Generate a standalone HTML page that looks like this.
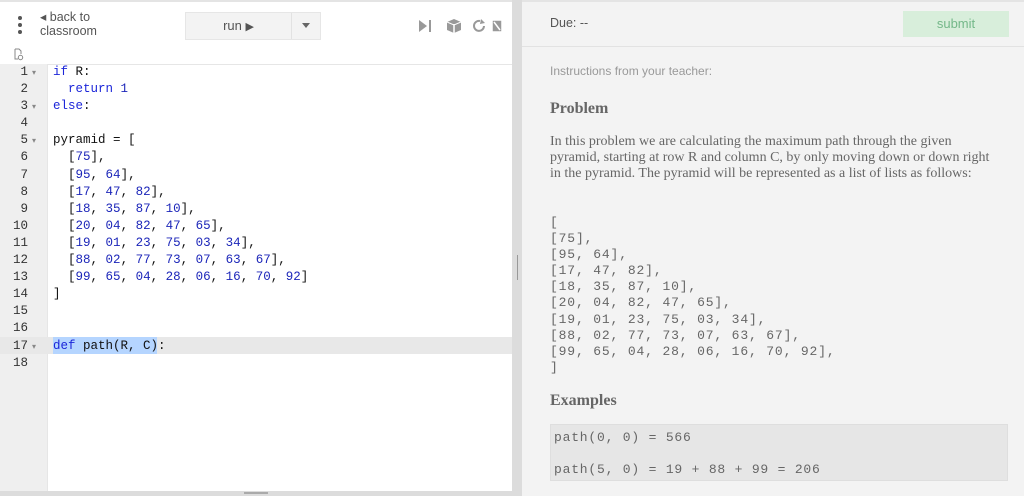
<!DOCTYPE html>
<html><head><style>
*{margin:0;padding:0;box-sizing:border-box}
body{width:1024px;height:496px;overflow:hidden;background:#f3f3f3;font-family:"Liberation Sans",sans-serif;position:relative}
#left{position:absolute;left:0;top:0;width:512px;height:491px;background:#fff;border-top:2px solid #e4e4e4}
#divider{position:absolute;left:512px;top:0;width:10px;height:496px;background:#dcdcdc}
#bottom{position:absolute;left:0;top:491px;width:512px;height:5px;background:#dcdcdc}
#gutter{position:absolute;left:0;top:64px;width:48px;height:427px;background:#efefef;border-right:1px solid #e6e6e6}
.k{color:#1c26d9}.n{color:#1c26b9}
#right{position:absolute;left:522px;top:0;right:0;height:496px;background:#f3f3f3}
pre{font-family:"Liberation Mono",monospace}
</style></head><body>
<div id="left">
 <div style="position:absolute;left:18px;top:14px;width:4px">
  <div style="width:4px;height:4px;border-radius:50%;background:#555;margin-bottom:3px"></div>
  <div style="width:4px;height:4px;border-radius:50%;background:#555;margin-bottom:3px"></div>
  <div style="width:4px;height:4px;border-radius:50%;background:#555"></div>
 </div>
 <div style="position:absolute;left:40px;top:8px;font-size:12.5px;line-height:14px;color:#555">◂ back to<br>classroom</div>
 <div style="position:absolute;left:185px;top:10px;width:136px;height:28px;background:#f3f3f3;border:1px solid #e6e6e6">
  <div style="position:absolute;left:0;top:0;width:106px;height:26px;border-right:1px solid #e2e2e2;text-align:center;line-height:25px;font-size:13px;color:#555">run <span style="font-size:11px">▶</span></div>
  <div style="position:absolute;left:116px;top:10px;border-left:4px solid transparent;border-right:4px solid transparent;border-top:5px solid #666"></div>
 </div>
 <svg style="position:absolute;left:418px;top:16px" width="86" height="16" viewBox="0 0 86 16" fill="#999">
  <path d="M1 2 L9 8 L1 14Z"/><rect x="11" y="2" width="2" height="12"/>
  <path d="M36 1 L43 4 L43 12 L36 15 L29 12 L29 4Z"/><path d="M36 6 L36 15" stroke="#fff" stroke-width="1.5"/><path d="M29 4 L36 7 L43 4" stroke="#fff" stroke-width="1" fill="none"/>
  <path d="M62 3 A5 5 0 1 0 66 8" stroke="#999" stroke-width="2" fill="none"/><path d="M63 1 L67 5 L62 6Z"/>
  <path d="M74 2 L84 2 L84 14 L74 14Z M76 4 L82 12" stroke="#fff" stroke-width="1.5"/>
 </svg>
 <svg style="position:absolute;left:14px;top:46px" width="10" height="13" viewBox="0 0 10 13"><path d="M1 1 H5 L7 3 V6 M1 1 V11 H4" stroke="#888" fill="none"/><circle cx="6.5" cy="9.5" r="2.2" stroke="#888" fill="none"/></svg>
 <div style="position:absolute;left:0;top:62px;width:512px;height:1px;background:#e6e6e6"></div>
</div>
<div id="gutter"></div>
<div style="position:absolute;left:0;top:337px;width:512px;height:17px;background:#e8e8e8"></div>
<div style="position:absolute;left:53px;top:337px;width:104px;height:17px;background:#b5d5ff"></div>
<div style="position:absolute;top:64px;left:0;width:512px">
<pre style="position:absolute;left:0;top:0;width:28px;text-align:right;font:12.5px 'Liberation Mono',monospace;line-height:17.1px;color:#333">1
2
3
4
5
6
7
8
9
10
11
12
13
14
15
16
17
18</pre>
<pre style="position:absolute;left:32px;top:0;font:8px 'Liberation Sans',sans-serif;line-height:17.1px;color:#888">▾

▾

▾











▾</pre>
<pre style="position:absolute;left:53px;top:0;font:12.5px 'Liberation Mono',monospace;line-height:17.1px;color:#111"><span class="k">if</span> R:
  <span class="k">return</span> <span class="n">1</span>
<span class="k">else</span>:

pyramid = [
  [<span class="n">75</span>],
  [<span class="n">95</span>, <span class="n">64</span>],
  [<span class="n">17</span>, <span class="n">47</span>, <span class="n">82</span>],
  [<span class="n">18</span>, <span class="n">35</span>, <span class="n">87</span>, <span class="n">10</span>],
  [<span class="n">20</span>, <span class="n">04</span>, <span class="n">82</span>, <span class="n">47</span>, <span class="n">65</span>],
  [<span class="n">19</span>, <span class="n">01</span>, <span class="n">23</span>, <span class="n">75</span>, <span class="n">03</span>, <span class="n">34</span>],
  [<span class="n">88</span>, <span class="n">02</span>, <span class="n">77</span>, <span class="n">73</span>, <span class="n">07</span>, <span class="n">63</span>, <span class="n">67</span>],
  [<span class="n">99</span>, <span class="n">65</span>, <span class="n">04</span>, <span class="n">28</span>, <span class="n">06</span>, <span class="n">16</span>, <span class="n">70</span>, <span class="n">92</span>]
]


<span class="k">def</span> path(R, C):
</pre>
</div>
<div id="divider"><div style="position:absolute;left:5px;top:255px;width:1px;height:25px;background:#999"></div></div>
<div id="bottom"><div style="position:absolute;left:244px;top:1px;width:24px;height:2px;background:#aaa"></div></div>
<div id="right">
 <div style="position:absolute;left:0;top:0;right:0;height:2px;background:#e4e4e4"></div>
 <div style="position:absolute;left:28px;top:16px;font-size:12.5px;color:#555">Due: --</div>
 <div style="position:absolute;left:381px;top:11px;width:106px;height:26px;background:#d8eedb;color:#74b889;font-size:13px;text-align:center;line-height:25px">submit</div>
 <div style="position:absolute;left:0;top:46px;right:0;height:1px;background:#e2e2e2"></div>
 <div style="position:absolute;left:28px;top:64px;font-size:12px;color:#999">Instructions from your teacher:</div>
 <div style="position:absolute;left:28px;top:100px;font:bold 16px 'Liberation Serif',serif;color:#666">Problem</div>
 <div style="position:absolute;left:28px;top:134px;width:450px;font:14px/16.2px 'Liberation Serif',serif;color:#666">In this problem we are calculating the maximum path through the given pyramid, starting at row R and column C, by only moving down or down right in the pyramid. The pyramid will be represented as a list of lists as follows:</div>
 <pre style="position:absolute;left:28px;top:215px;font-size:13px;line-height:16.1px;letter-spacing:0.85px;color:#666">[
[75],
[95, 64],
[17, 47, 82],
[18, 35, 87, 10],
[20, 04, 82, 47, 65],
[19, 01, 23, 75, 03, 34],
[88, 02, 77, 73, 07, 63, 67],
[99, 65, 04, 28, 06, 16, 70, 92],
]</pre>
 <div style="position:absolute;left:28px;top:392px;font:bold 16px 'Liberation Serif',serif;color:#666">Examples</div>
 <div style="position:absolute;left:28px;top:424px;width:458px;height:57px;background:#e6e6e6;border:1px solid #dedede"></div>
 <pre style="position:absolute;left:32px;top:422px;font-size:13px;line-height:32px;letter-spacing:0.8px;color:#666">path(0, 0) = 566
path(5, 0) = 19 + 88 + 99 = 206</pre>
</div>
</body></html>
